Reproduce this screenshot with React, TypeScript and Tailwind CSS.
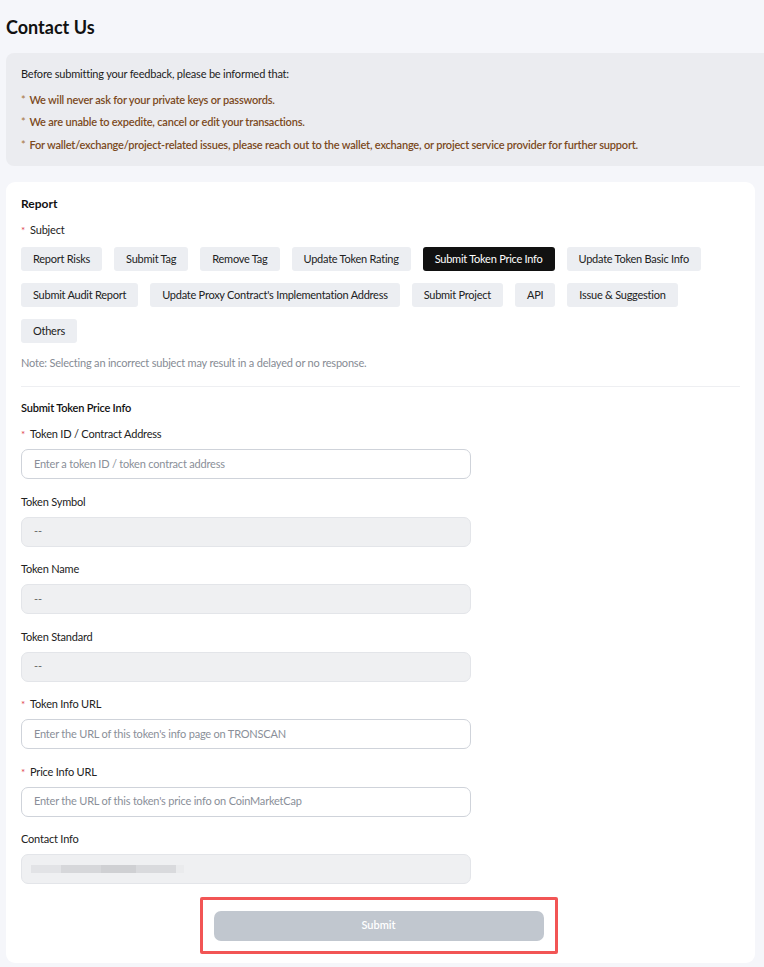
import React from "react";

const subjects = [
  ["Report Risks", "Submit Tag", "Remove Tag", "Update Token Rating", "Submit Token Price Info", "Update Token Basic Info"],
  ["Submit Audit Report", "Update Proxy Contract's Implementation Address", "Submit Project", "API", "Issue & Suggestion"],
  ["Others"],
];

function Label({ text, required }: { text: string; required?: boolean }) {
  return (
    <div className="flex items-center h-4 text-[11px] tracking-[-0.2px] text-[#222] leading-4">
      {required && <span className="text-[#e0464f] mr-[5px] text-[10px]">*</span>}
      <span>{text}</span>
    </div>
  );
}

function Field({
  label,
  required,
  placeholder,
  disabled,
  value,
  blurred,
}: {
  label: string;
  required?: boolean;
  placeholder?: string;
  disabled?: boolean;
  value?: string;
  blurred?: boolean;
}) {
  return (
    <div className="flex flex-col">
      <Label text={label} required={required} />
      <div
        className={
          "mt-[7px] w-[450px] h-[30px] rounded-[7px] border flex items-center px-3 text-[11px] tracking-[-0.2px] " +
          (disabled ? "bg-[#eff0f2] border-[#e3e5e9] text-[#555]" : "bg-white border-[#cfd3da] text-[#8a8f99]")
        }
      >
        {blurred ? (
          <div className="flex items-center ml-[-3px]">
            <div className="h-[8px] w-[30px] bg-[#e2e3e6]" />
            <div className="h-[8px] w-[40px] bg-[#d6d7da]" />
            <div className="h-[8px] w-[35px] bg-[#cfd0d3]" />
            <div className="h-[8px] w-[40px] bg-[#d9dadd]" />
            <div className="h-[8px] w-[8px] bg-[#eaebed]" />
          </div>
        ) : disabled ? (
          <span className="text-[#666]">{value}</span>
        ) : (
          <span>{placeholder}</span>
        )}
      </div>
    </div>
  );
}

export default function App() {
  return (
    <div
      className="min-h-[967px] w-[764px] overflow-hidden bg-[#f5f6fa] text-[#222]"
      style={{ fontFamily: "Lato, 'Open Sans', sans-serif" }}
    >
      <div className="pl-[6px] pt-[14px]">
        <h1 className="text-[18px] font-bold leading-[26px] text-[#111] h-[26px]">Contact Us</h1>
        <div className="mt-[13px] w-[770px] h-[113px] rounded-l-[8px] bg-[#ebecf0] pl-[15px] pt-[14px] text-[11px] tracking-[-0.2px] leading-[14px]">
          <div className="h-[14px] text-[#1c1c1c]">Before submitting your feedback, please be informed that:</div>
          <div className="h-[14px] mt-[12px] text-[#7b4a1d] font-semibold">
            <span className="font-normal text-[#a8733f] mr-[4px]">*</span>We will never ask for your private keys or passwords.
          </div>
          <div className="h-[14px] mt-[8px] text-[#7b4a1d] font-semibold">
            <span className="font-normal text-[#a8733f] mr-[4px]">*</span>We are unable to expedite, cancel or edit your transactions.
          </div>
          <div className="h-[14px] mt-[9px] text-[#7b4a1d] font-semibold">
            <span className="font-normal text-[#a8733f] mr-[4px]">*</span>For wallet/exchange/project-related issues, please reach out to the wallet, exchange, or project service provider for further support.
          </div>
        </div>

        <div className="mt-[16px] w-[749px] rounded-[9px] bg-white px-[15px] pt-[14px] pb-[9px]">
          <div className="text-[12px] font-bold leading-4 text-[#111]">Report</div>
          <div className="mt-[10px]">
            <Label text="Subject" required />
          </div>
          <div className="mt-[9px] flex flex-col gap-[12px]">
            {subjects.map((row, i) => (
              <div key={i} className="flex gap-[12px]">
                {row.map((s) => {
                  const active = s === "Submit Token Price Info";
                  return (
                    <div
                      key={s}
                      className={
                        "h-[24px] px-[12px] rounded-[3px] flex items-center text-[11px] tracking-[-0.25px] whitespace-nowrap " +
                        (active ? "bg-[#111111] text-white" : "bg-[#eceef2] text-[#222]")
                      }
                    >
                      {s}
                    </div>
                  );
                })}
              </div>
            ))}
          </div>
          <div className="mt-[12px] text-[11px] tracking-[-0.2px] leading-4 text-[#868b94]">
            Note: Selecting an incorrect subject may result in a delayed or no response.
          </div>
          <div className="mt-[15px] h-px w-[719px] bg-[#eeeff2]" />
          <div className="mt-[13px] text-[11px] tracking-[-0.2px] font-semibold leading-4 text-[#111]">Submit Token Price Info</div>
          <div className="mt-[10px] flex flex-col gap-[14.5px]">
            <Field label="Token ID / Contract Address" required placeholder="Enter a token ID / token contract address" />
            <Field label="Token Symbol" disabled value="--" />
            <Field label="Token Name" disabled value="--" />
            <Field label="Token Standard" disabled value="--" />
            <Field label="Token Info URL" required placeholder="Enter the URL of this token's info page on TRONSCAN" />
            <Field label="Price Info URL" required placeholder="Enter the URL of this token's price info on CoinMarketCap" />
            <Field label="Contact Info" disabled blurred />
          </div>
          <div className="mt-[13px] flex justify-center">
            <div className="ml-[-4px]">
              <div className="w-[358px] h-[57px] border-[3px] border-[#f25555] rounded-[2px] flex items-center justify-center">
                <div className="w-[330px] h-[30px] rounded-[7px] bg-[#c1c7cf] text-white text-[11px] font-semibold flex items-center justify-center">
                  Submit
                </div>
              </div>
            </div>
          </div>
        </div>
      </div>
    </div>
  );
}
